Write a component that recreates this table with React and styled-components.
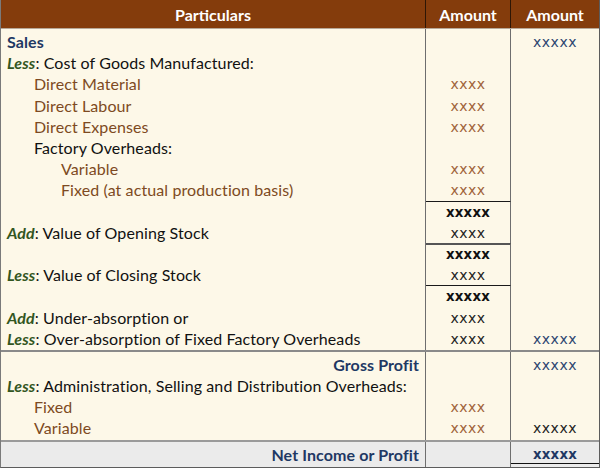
import React from 'react'
import styled, {createGlobalStyle, css} from 'styled-components'

const GlobalStyle = createGlobalStyle`
    *, *::before, *::after {
        box-sizing: border-box;
    }
    html, body {
        margin: 0;
        padding: 0;
        background: #fff;
    }
    body {
        font-family: Lato, "Liberation Sans", sans-serif;
    }
`

const COLS = '425px 85px 1fr'

const Sheet = styled.div`
    width: 600px;
    border-left: 1px solid #7a7a7a;
    border-right: 1px solid #5c5c5c;
    border-bottom: 1px solid #5c5c5c;
    background: #fdf8e8;
`
const Header = styled.div`
    display: grid;
    grid-template-columns: ${COLS};
    height: 29px;
    background: #843c0c;
    border-bottom: 1px solid #b8a898;
`
const HeadCell = styled.div`
    display: flex;
    align-items: center;
    justify-content: center;
    color: #fff;
    font-weight: 700;
    font-size: 16px;
    border-right: ${p => (p.$last ? 'none' : '1px solid #2e1605')};
`
const Section = styled.div`
    border-bottom: ${p => p.$divider || 'none'};
`
const Row = styled.div`
    display: grid;
    grid-template-columns: ${COLS};
    background: ${p => p.$shade || 'transparent'};
    & > div {
        height: ${p => (p.$h || 21.2) + (p.$top || 0) + (p.$bottom || 0)}px;
        padding-top: ${p => p.$top || 0}px;
        padding-bottom: ${p => p.$bottom || 0}px;
    }
`
const LabelCell = styled.div`
    display: flex;
    align-items: center;
    justify-content: ${p => (p.$right ? 'flex-end' : 'flex-start')};
    padding-left: ${p => 6 + (p.$indent || 0) * 27}px;
    padding-right: 6px;
    font-size: 16px;
    letter-spacing: 0.1px;
    color: ${p => p.$color || '#111'};
    border-right: 1px solid #6e6e6e;
    white-space: nowrap;
`
const AmountCell = styled.div`
    display: flex;
    align-items: center;
    justify-content: center;
    border-right: ${p => (p.$last ? 'none' : '1px solid #6e6e6e')};
    border-top: ${p => p.$rule || 'none'};
    font-family: "DejaVu Sans", Verdana, sans-serif;
    ${p => p.$underline && css`
        box-shadow: inset 0 -3px 0 #ebebeb, inset 0 -4px 0 #111;
    `}
`
const Heading = styled.span`
    font-weight: 700;
    color: #1f3864;
    font-size: 16px;
`
const Prefix = styled.span`
    font-weight: 700;
    font-style: italic;
    color: #33561f;
`
const Marks = styled.span`
    font-size: ${p => (p.$bold ? 13.3 : 14)}px;
    font-weight: ${p => (p.$bold ? 700 : 400)};
    letter-spacing: ${p => (p.$bold ? 0.2 : 0.5)}px;
    color: ${p => p.$color};
    padding-top: 1px;
`

const BROWN = '#7d4a22'
const MARK = {
    brown: {color: '#a0633a'},
    plain: {color: '#222'},
    bold: {color: '#111', bold: true},
    navy: {color: '#2c4570'},
    navyBold: {color: '#1f3864', bold: true},
}

const Amount = ({v}) => {
    if (!v) return null
    const [text, kind] = v
    const m = MARK[kind]
    return <Marks $color={m.color} $bold={m.bold}>{text}</Marks>
}

const Label = ({r}) => {
    if (r.head) return <Heading>{r.head}</Heading>
    if (r.prefix) return <span><Prefix>{r.prefix}</Prefix>: {r.text}</span>
    return <span>{r.text}</span>
}

const x4 = k => ['xxxx', k]
const x5 = k => ['xxxxx', k]

const topRows = [
    {head: 'Sales', right: x5('navy')},
    {prefix: 'Less', text: 'Cost of Goods Manufactured:'},
    {text: 'Direct Material', indent: 1, color: BROWN, mid: x4('brown')},
    {text: 'Direct Labour', indent: 1, color: BROWN, mid: x4('brown')},
    {text: 'Direct Expenses', indent: 1, color: BROWN, mid: x4('brown')},
    {text: 'Factory Overheads:', indent: 1},
    {text: 'Variable', indent: 2, color: BROWN, mid: x4('brown')},
    {text: 'Fixed (at actual production basis)', indent: 2, color: BROWN, mid: x4('brown')},
    {mid: x5('bold'), rule: '1px solid #1a1a1a'},
    {prefix: 'Add', text: 'Value of Opening Stock', mid: x4('plain')},
    {mid: x5('bold'), rule: '2px solid #555'},
    {prefix: 'Less', text: 'Value of Closing Stock', mid: x4('plain')},
    {mid: x5('bold'), rule: '1px solid #1a1a1a'},
    {prefix: 'Add', text: 'Under-absorption or', mid: x4('plain')},
    {prefix: 'Less', text: 'Over-absorption of Fixed Factory Overheads', mid: x4('plain'), right: x5('navy')},
]

const lowerRows = [
    {head: 'Gross Profit', alignRight: true, right: x5('navy')},
    {prefix: 'Less', text: 'Administration, Selling and Distribution Overheads:'},
    {text: 'Fixed', indent: 1, color: BROWN, mid: x4('brown')},
    {text: 'Variable', indent: 1, color: BROWN, mid: x4('brown'), right: x5('plain')},
]

const renderRows = rows =>
    rows.map((r, i) => (
        <Row key={i} $top={i === 0 ? 2 : 0} $bottom={i === rows.length - 1 ? 1 : 0}>
            <LabelCell $indent={r.indent} $color={r.color} $right={r.alignRight}>
                <Label r={r}/>
            </LabelCell>
            <AmountCell $rule={r.rule}><Amount v={r.mid}/></AmountCell>
            <AmountCell $last><Amount v={r.right}/></AmountCell>
        </Row>
    ))

const App = () => {
    return (
        <>
            <GlobalStyle/>
            <Sheet>
                <Header>
                    <HeadCell>Particulars</HeadCell>
                    <HeadCell>Amount</HeadCell>
                    <HeadCell $last>Amount</HeadCell>
                </Header>
                <Section $divider="2px solid #8a8a8a">{renderRows(topRows)}</Section>
                <Section $divider="2px solid #9a9a9a">{renderRows(lowerRows)}</Section>
                <Row $shade="#ebebeb" $h={25}>
                    <LabelCell $right>
                        <Heading>Net Income or Profit</Heading>
                    </LabelCell>
                    <AmountCell/>
                    <AmountCell $last $underline><Amount v={x5('navyBold')}/></AmountCell>
                </Row>
            </Sheet>
        </>
    )
}

export default App
